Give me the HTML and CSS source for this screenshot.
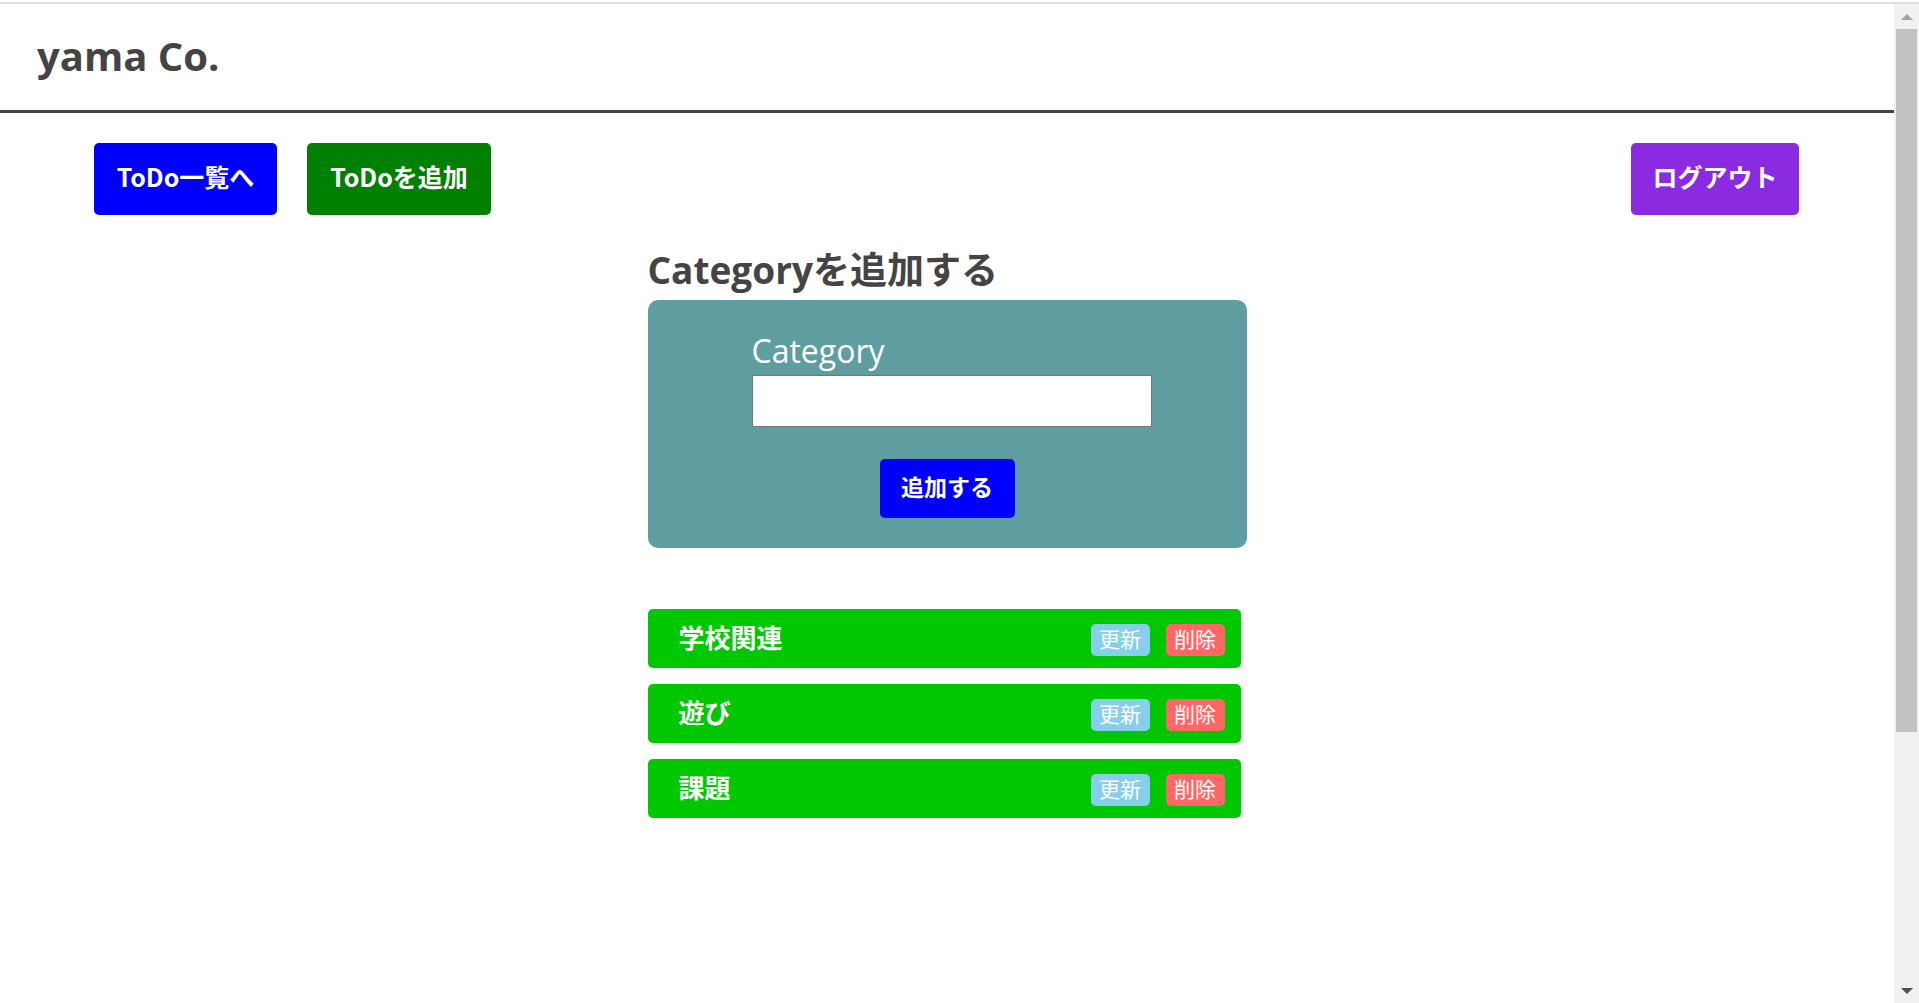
FILE: index.html
```html
<!DOCTYPE html>
<html lang="ja">
<head>
  <meta charset="UTF-8">
  <meta name="viewport" content="width=device-width, initial-scale=1.0">
  <title>Category追加</title>
  <link rel="stylesheet" href="styles.css">
</head>
<body>

    <div class="topline"></div>

    <div class="window">

        <!-- ページ本体 -->
        <div class="page">

            <header>
                <h1>yama Co.</h1>
            </header>

            <!-- ナビゲーションボタン -->
            <nav class="nav">
                <div class="nav-left">
                    <a href="#" class="btn btn-list">ToDo一覧へ</a>
                    <a href="#" class="btn btn-add">ToDoを追加</a>
                </div>
                <a href="#" class="btn btn-logout">ログアウト</a>
            </nav>

            <div class="content">
                <h2>Categoryを追加する</h2>

                <!-- 追加フォーム -->
                <form class="card">
                    <div class="field">
                        <label for="category">Category</label>
                        <input type="text" id="category" name="category">
                    </div>
                    <div class="submit-wrap">
                        <button type="submit" class="btn-submit">追加する</button>
                    </div>
                </form>

                <!-- カテゴリー一覧 -->
                <ul class="category-list">
                    <li class="category-item">
                        <span class="category-name">学校関連</span>
                        <div class="actions">
                            <button class="btn-update">更新</button>
                            <button class="btn-delete">削除</button>
                        </div>
                    </li>
                    <li class="category-item">
                        <span class="category-name">遊び</span>
                        <div class="actions">
                            <button class="btn-update">更新</button>
                            <button class="btn-delete">削除</button>
                        </div>
                    </li>
                    <li class="category-item">
                        <span class="category-name">課題</span>
                        <div class="actions">
                            <button class="btn-update">更新</button>
                            <button class="btn-delete">削除</button>
                        </div>
                    </li>
                </ul>
            </div>
        </div>

        <!-- スクロールバー (見た目だけ) -->
        <div class="scrollbar">
            <div class="arrow arrow-up"></div>
            <div class="thumb"></div>
            <div class="track"></div>
            <div class="arrow arrow-down"></div>
        </div>
    </div>

</body>
</html>
```

FILE: styles.css
```css
html, body {
  margin: 0;
  height: 100%;
  overflow: hidden;
}

body {
  font-family: "Open Sans", "Noto Sans CJK JP", sans-serif;
  color: #444;
  background-color: #fff;
}

.topline {
  height: 2px;
  border-top: 2px solid #fff;
  background-color: #dedede;
}

.window {
  display: flex;
  height: calc(100% - 4px);
}

.page {
  flex: 1;
}

/* ヘッダー */
header {
  padding: 25px 37px 27px;
  border-bottom: 3px solid #444;
}

header h1 {
  margin: 0;
  font-size: 40px;
  line-height: 54px;
  font-weight: bold;
}

/* ボタン */
.nav {
  display: flex;
  justify-content: space-between;
  padding: 30px 95px 0 94px;
}

.nav-left {
  display: flex;
  gap: 30px;
}

.btn {
  display: flex;
  align-items: center;
  justify-content: center;
  box-sizing: border-box;
  height: 72px;
  padding-bottom: 6px;
  border-radius: 5px;
  color: white;
  font-family: "Noto Sans CJK JP", sans-serif;
  font-size: 25px;
  font-weight: bold;
  text-decoration: none;
}

.btn-list {
  width: 183px;
  background-color: #0000ff;
}

.btn-add {
  width: 184px;
  background-color: #008000;
}

.btn-logout {
  width: 168px;
  background-color: #8a2be2;
}

/* コンテンツ */
.content {
  width: 599px;
  margin: 0 auto;
}

.content h2 {
  margin: 30px 0 5px;
  font-size: 37px;
  line-height: 50px;
  font-weight: bold;
}

.card {
  background-color: #5f9ea0;
  border-radius: 10px;
  padding: 29px 0 30px;
}

.field {
  margin: 0 95px 0 104px;
}

.field label {
  display: block;
  color: white;
  font-size: 32px;
  line-height: 44px;
  margin-bottom: 2px;
}

.field input {
  display: block;
  box-sizing: border-box;
  width: 400px;
  height: 52px;
  border: 1px solid #767676;
  background-color: white;
  margin: 0;
}

.submit-wrap {
  text-align: center;
  margin-top: 32px;
}

.btn-submit {
  width: 135px;
  height: 59px;
  border: none;
  border-radius: 5px;
  background-color: #0000ff;
  color: white;
  font-family: "Noto Sans CJK JP", sans-serif;
  font-size: 23px;
  font-weight: bold;
  padding: 0 0 5px;
}

/* カテゴリー一覧 */
.category-list {
  list-style: none;
  margin: 61px 0 0;
  padding: 0;
  width: 593px;
  display: flex;
  flex-direction: column;
  gap: 16px;
}

.category-item {
  display: flex;
  align-items: center;
  justify-content: space-between;
  height: 59px;
  padding: 0 16px 0 31px;
  background-color: #00c800;
  border-radius: 5px;
}

.category-name {
  color: white;
  font-family: "Noto Sans CJK JP", sans-serif;
  font-size: 26px;
  font-weight: bold;
  padding-bottom: 5px;
}

.actions {
  display: flex;
  gap: 16px;
  margin-top: 2px;
}

.actions button {
  width: 59px;
  height: 32px;
  border: none;
  border-radius: 5px;
  color: white;
  font-family: "Noto Sans CJK JP", sans-serif;
  font-size: 21px;
  padding: 0 0 3px;
  line-height: 29px;
}

.btn-update {
  background-color: #87ceeb;
}

.btn-delete {
  background-color: #ff6666;
}

/* スクロールバー */
.scrollbar {
  width: 25px;
  display: flex;
  flex-direction: column;
  background-color: #f1f1f1;
}

.arrow {
  height: 25px;
  display: flex;
  align-items: center;
  justify-content: center;
}

.arrow-up::after {
  content: "";
  border-left: 6px solid transparent;
  border-right: 6px solid transparent;
  border-bottom: 6px solid #a3a3a3;
}

.arrow-down::after {
  content: "";
  border-left: 6px solid transparent;
  border-right: 6px solid transparent;
  border-top: 6px solid #505050;
}

.thumb {
  height: 703px;
  margin: 0 2px;
  background-color: #c1c1c1;
}

.track {
  flex: 1;
}
```
